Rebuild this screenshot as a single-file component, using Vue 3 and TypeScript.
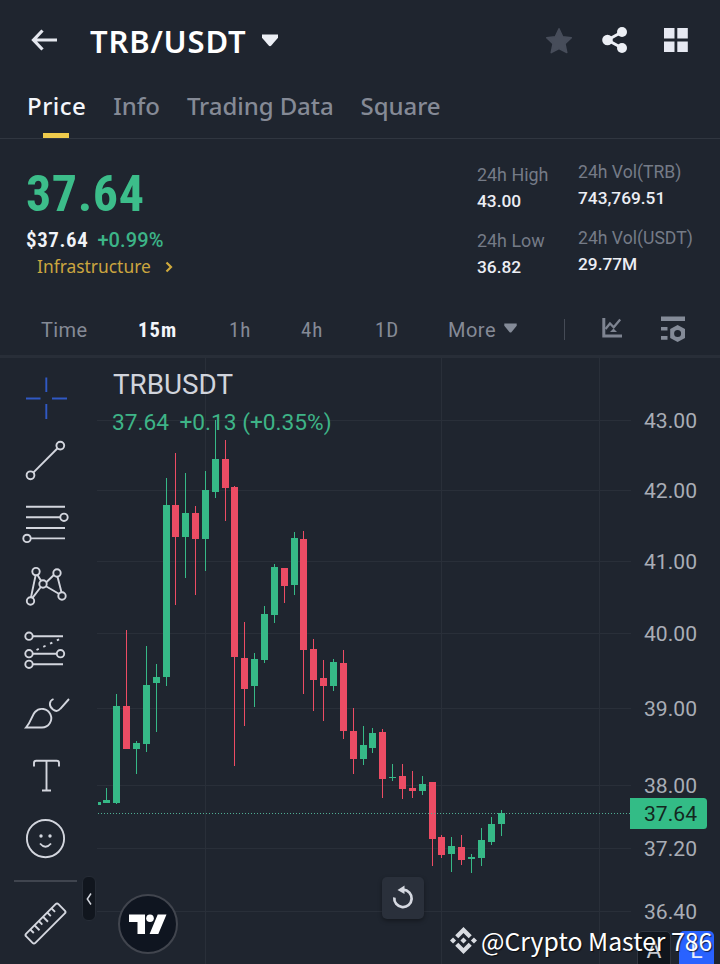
<script setup lang="ts">
interface Candle {
  x: number
  top: number
  bottom: number
  high: number
  low: number
  up: boolean
}

const tabs = ['Price', 'Info', 'Trading Data', 'Square']

const stats = [
  [
    { label: '24h High', value: '43.00' },
    { label: '24h Low', value: '36.82' },
  ],
  [
    { label: '24h Vol(TRB)', value: '743,769.51' },
    { label: '24h Vol(USDT)', value: '29.77M' },
  ],
]

// x centre, body top, body bottom, wick top, wick bottom, 1 = rising
const rows: number[][] = [
  [106.5, 800, 803, 788, 803, 1],
  [116.5, 706, 803, 694, 804, 1],
  [126.5, 706, 749, 630, 749, 0],
  [136.5, 743, 749, 741, 774, 1],
  [146.5, 685, 744, 646, 752, 1],
  [156.5, 677, 683, 664, 732, 1],
  [166.5, 505, 677, 478, 686, 1],
  [175.5, 505, 537, 453, 605, 0],
  [185.5, 513, 537, 473, 578, 1],
  [195.5, 513, 539, 506, 595, 0],
  [205.5, 490, 539, 471, 571, 1],
  [215.5, 459, 492, 420, 498, 1],
  [225.5, 459, 488, 440, 521, 0],
  [234.5, 487, 657, 486, 766, 0],
  [244.5, 658, 689, 622, 726, 0],
  [254.5, 659, 686, 653, 707, 1],
  [264.5, 614, 660, 606, 663, 1],
  [274.5, 567, 615, 564, 623, 1],
  [284.5, 568, 586, 568, 603, 0],
  [294.5, 538, 585, 532, 595, 1],
  [303.5, 539, 650, 531, 694, 0],
  [313.5, 649, 680, 639, 711, 0],
  [323.5, 678, 686, 660, 721, 0],
  [333.5, 662, 686, 659, 691, 1],
  [343.5, 663, 731, 650, 739, 0],
  [353.5, 731, 759, 708, 774, 0],
  [363.5, 745, 759, 726, 765, 1],
  [372.5, 733, 748, 728, 753, 1],
  [382.5, 732, 779, 729, 798, 0],
  [392.5, 777, 778, 764, 781, 1],
  [402.5, 776, 789, 764, 799, 0],
  [412.5, 788, 791, 771, 798, 0],
  [422.5, 784, 791, 776, 795, 1],
  [432.5, 782, 839, 782, 866, 0],
  [441.5, 837, 855, 835, 858, 0],
  [451.5, 846, 854, 837, 872, 1],
  [461.5, 847, 860, 835, 865, 0],
  [471.5, 857, 859, 854, 873, 1],
  [481.5, 840, 858, 828, 866, 1],
  [491.5, 824, 842, 817, 845, 1],
  [501.5, 813, 824, 810, 836, 1],
]

const candles: Candle[] = rows.map(([x, top, bottom, high, low, up]) => ({
  x, top, bottom, high, low, up: up === 1,
}))

const priceLevels = [
  { y: 420.5, label: '43.00' },
  { y: 490, label: '42.00' },
  { y: 561, label: '41.00' },
  { y: 633.5, label: '40.00' },
  { y: 708.5, label: '39.00' },
  { y: 785, label: '38.00' },
  { y: 848, label: '37.20' },
  { y: 911.5, label: '36.40' },
]

const timeLines = [205.5, 441.5, 599.5]
</script>

<template>
  <div class="screen">
    <header class="header">
      <svg class="back" width="28" height="24" viewBox="0 0 28 24">
        <path d="M12.5 2.5 3.5 12l9 9.5M3.5 12H27" fill="none" stroke="#e4e7ee" stroke-width="3.2" />
      </svg>
      <h1 class="pair">TRB/USDT</h1>
      <svg class="caret" width="16" height="13" viewBox="0 0 16 13">
        <path d="M0 0.5h16v3.3L9.3 11.6q-1.3 1.4-2.6 0L0 3.8z" fill="#eceff5" />
      </svg>
      <svg class="star" width="28" height="28" viewBox="0 0 28 28">
        <path d="M14 1.8l3.7 7.9 8.6 1.1-6.3 6 1.8 8.8-7.8-4.1-7.8 4.1L8 16.8 1.7 10.8l8.600-1.1z" fill="#474d5a" stroke="#474d5a" stroke-width="1.5" stroke-linejoin="round" />
      </svg>
      <svg class="share" width="28" height="28" viewBox="0 0 28 28">
        <path d="M21 6 6.5 14 21 22" fill="none" stroke="#eceff5" stroke-width="3" />
        <circle cx="21" cy="6" r="5" fill="#eceff5" />
        <circle cx="6.5" cy="14" r="5.3" fill="#eceff5" />
        <circle cx="21" cy="22" r="5" fill="#eceff5" />
      </svg>
      <svg class="apps" width="24" height="24" viewBox="0 0 24 24" fill="#e6e9f2">
        <path d="M0 0h10.5v10.5H0zM13.3 0h10.5v10.5H13.3zM0 13.5h10.5V24H0zM13.3 13.5h10.5V24H13.3z" />
      </svg>
    </header>

    <nav class="tabs">
      <span v-for="(tab, i) in tabs" :key="tab" class="tab" :class="{ active: i === 0 }">{{ tab }}</span>
    </nav>

    <section class="summary">
      <div class="quote">
        <div class="last">37.64</div>
        <div class="change"><span class="usd">$37.64</span><span class="pct">+0.99%</span></div>
        <div class="tag">
          <span>Infrastructure</span>
          <svg width="8" height="12" viewBox="0 0 8 12">
            <path d="M1.5 1.5 6 6l-4.5 4.5" fill="none" stroke="#cfa93c" stroke-width="2.2" />
          </svg>
        </div>
      </div>
      <div v-for="(column, c) in stats" :key="c" class="stats" :class="'col' + c">
        <div v-for="item in column" :key="item.label" class="stat">
          <div class="label">{{ item.label }}</div>
          <div class="value">{{ item.value }}</div>
        </div>
      </div>
    </section>

    <div class="intervals">
      <span class="time">Time</span>
      <span class="m15">15m</span>
      <span class="h1">1h</span>
      <span class="h4">4h</span>
      <span class="d1">1D</span>
      <span class="more">More</span>
      <svg class="more-caret" width="13" height="10" viewBox="0 0 13 10">
        <path d="M0.3 0.5h12.4v2.2L7.6 8.9q-1.1 1.2-2.2 0L0.3 2.7z" fill="#848b98" />
      </svg>
      <i class="split"></i>
      <svg class="indicator" width="20" height="20" viewBox="0 0 20 20">
        <path d="M1.8 0v18H20" fill="none" stroke="#7e8491" stroke-width="3" />
        <path d="M3.5 11 8 5.5l3.7 3.7L18.2 1.6" fill="none" stroke="#7e8491" stroke-width="2.3" />
        <path d="M11.5 10.5l3.5 3.500H8z" fill="#7e8491" />
      </svg>
      <svg class="settings" width="26" height="26" viewBox="0 0 26 26" fill="#848b98">
        <path d="M1 0.5h24V5H1zM1 11h6.5v3.5H1zM1 20h6.5v3.7H1z" />
        <path fill-rule="evenodd" d="M17.6 9 25 13v9l-7.400 4-7.400-4v-9zM17.6 14a3.500 3.500 0 1 0 0 7 3.500 3.500 0 0 0 0-7z" />
      </svg>
    </div>

    <main class="workspace">
      <aside class="tools">
        <svg viewBox="0 0 92 63" class="tool blue">
          <path d="M46.3 11.5V26M46.3 38v15M26 32.5h14.5M52 32.5h15" />
        </svg>
        <svg viewBox="0 0 92 63" class="tool">
          <path d="M33.5 43.3 57.3 19.5" /><circle cx="60.3" cy="16.6" r="3.9" /><circle cx="30.5" cy="46.3" r="3.9" />
        </svg>
        <svg viewBox="0 0 92 63" class="tool">
          <path d="M26 14.7h39M26 25.3h34M26 36h39M31 46.4h34" />
          <circle cx="64" cy="25.3" r="3.7" /><circle cx="27" cy="46.4" r="3.7" />
        </svg>
        <svg viewBox="0 0 92 63" class="tool">
          <path d="M35.6 20.4 31 42.3M37.5 20l3.5 5.7M46.3 27.2 53.8 20M40.8 32 32.5 42.9M46 31.3l12.8 7.4M57.5 21.7l4 15.5" />
          <circle cx="36" cy="16.6" r="3.7" /><circle cx="57" cy="18" r="3.7" /><circle cx="43" cy="29" r="3.7" />
          <circle cx="62" cy="41" r="3.7" /><circle cx="30.5" cy="46" r="3.7" />
        </svg>
        <svg viewBox="0 0 92 63" class="tool">
          <path d="M33 18.2h30M33 35.7h23.5M33 46.3h30" />
          <path d="M36.5 32 62 20" stroke-dasharray="2.5 5" />
          <circle cx="29" cy="18.2" r="3.7" /><circle cx="29" cy="35.7" r="3.7" />
          <circle cx="60.5" cy="35.7" r="3.7" /><circle cx="29" cy="46.3" r="3.7" />
        </svg>
        <svg viewBox="0 0 92 63" class="tool">
          <path d="M26 46.5C31.5 40 32 34 35 31A9.3 9.3 0 1 1 42 46.5Z" />
          <path d="M53.5 18C49 20 48.500 25 53 28.5 56 30.8 58.5 30 60.5 27.5L69 18" />
        </svg>
        <svg viewBox="0 0 92 63" class="tool">
          <path d="M34 22.500v-3.500q0-2.300 2.300-2.300h20.400q2.300 0 2.300 2.300v3.500M46.500 17v29.500M42 46.500h9" />
        </svg>
        <svg viewBox="0 0 92 63" class="tool">
          <circle cx="45.5" cy="31.6" r="18.6" />
          <path d="M40 36.5q5.5 6.5 11 0" />
          <circle cx="41" cy="29" r="1.7" class="dot" /><circle cx="50" cy="29" r="1.7" class="dot" />
        </svg>
        <i class="rule"></i>
        <svg viewBox="0 0 92 63" class="tool ruler">
          <g transform="translate(45.5 31.5) rotate(-45)">
            <rect x="-22.8" y="-6.5" width="45.6" height="13" rx="2" />
            <path d="M-15 -6.5v5M-9 -6.5v7M-3 -6.5v5M3 -6.5v7M9 -6.5v5M15 -6.5v5" />
          </g>
        </svg>
      </aside>

      <svg class="plot" width="623" height="606" viewBox="97 358 623 606">
        <g stroke="#292f39" stroke-width="1">
          <line v-for="x in timeLines" :key="x" :x1="x" :x2="x" y1="358" y2="964" />
          <line v-for="level in priceLevels" :key="level.label" x1="97" x2="631" :y1="Math.floor(level.y) + 0.5" :y2="Math.floor(level.y) + 0.5" />
        </g>
        <rect x="98" y="802" width="3" height="3" fill="#36b887" />
        <g v-for="c in candles" :key="c.x" :fill="c.up ? '#36b987' : '#ec4c64'">
          <rect :x="c.x - 0.5" :y="c.high" width="1" :height="c.low - c.high" />
          <rect :x="c.x - 3.5" :y="c.top" width="7" :height="c.bottom - c.top" />
        </g>
        <line x1="98" x2="630" y1="813.5" y2="813.5" stroke="#4fae93" stroke-dasharray="1 2" />
        <text x="113" y="394" class="symbol">TRBUSDT</text>
        <text x="112" y="430" class="ohlc">37.64</text>
        <text x="179.5" y="430" class="ohlc">+0.13 (+0.35%)</text>
        <text v-for="level in priceLevels" :key="level.label" x="644" :y="level.y + 7.5" class="axis">{{ level.label }}</text>
        <path d="M630 798h73.5q3.5 0 3.500 3.500v24q0 3.500-3.500 3.500H630z" fill="#33bc86" />
        <text x="644" y="821.3" class="axis current">37.64</text>
      </svg>

      <button class="collapse" aria-label="Collapse">
        <svg width="8" height="14" viewBox="0 0 8 14"><path d="M6 1.500 2.300 7 6 12.500" fill="none" stroke="#d1d4dc" stroke-width="1.500" /></svg>
      </button>
      <div class="brand">
        <svg width="38" height="20" viewBox="0 0 38 20" fill="#fff">
          <path d="M0 0.500h16V20H8.500V8H0zM28.700 0.500h8.800L29.300 20H20.600z" /><circle cx="21" cy="4.200" r="3.800" />
        </svg>
      </div>
      <button class="reset" aria-label="Reset">
        <svg width="24" height="26" viewBox="0 0 24 26">
          <path d="M3.300 12.500a8.700 8.700 0 1 0 9-7.800" fill="none" stroke="#d6d9e1" stroke-width="2.700" />
          <path d="M6.500 5 13.500 0.600v8.400z" fill="#d6d9e1" />
        </svg>
      </button>
      <div class="scale auto">A</div>
      <div class="scale log">L</div>
      <div class="watermark">
        <svg width="27" height="27" viewBox="0 0 24 24">
          <path fill="#d9dce2" d="M16.624 13.920l2.718 2.716-7.353 7.353-7.353-7.352 2.717-2.717 4.636 4.660 4.635-4.660zM21.261 9.284 24 12l-2.715 2.716L18.568 12zM11.989 9.285l2.716 2.691-2.716 2.718L9.272 12zM2.716 9.284 5.409 12l-2.692 2.692L0 12zM11.989.012l7.353 7.329-2.718 2.715-4.635-4.636-4.636 4.660-2.717-2.715z" />
        </svg>
        <span>@Crypto Master 786</span>
      </div>
    </main>
  </div>
</template>

<style>
body {
  background: #1f252f;
}
</style>

<style scoped>
.screen {
  width: 720px;
  height: 964px;
  overflow: hidden;
  display: flex;
  flex-direction: column;
  background: #1f252f;
  color: #858a96;
  font-family: Roboto, sans-serif;
}
.header {
  display: flex;
  align-items: center;
  height: 80px;
  padding-left: 30px;
}
.pair {
  width: 156px;
  margin: 2px 0 0 32px;
  font: 600 31px/40px "Noto Sans", sans-serif;
  letter-spacing: 0.8px;
  white-space: nowrap;
  color: #fff;
}
.caret { margin-left: 16px; }
.star { margin: 2px 0 0 267px; }
.share { margin-left: 28px; }
.apps { margin-left: 35px; }

.tabs {
  display: flex;
  gap: 27px;
  height: 58px;
  padding-left: 27px;
  border-bottom: 1px solid #303640;
}
.tab {
  position: relative;
  padding-top: 10px;
  font: 500 24px/32px "Noto Sans", sans-serif;
  letter-spacing: -0.06px;
  white-space: nowrap;
}
.tab.active { color: #f4f6fb; letter-spacing: 0.5px; }
.tab.active::after {
  content: "";
  position: absolute;
  left: 16px;
  bottom: 0;
  width: 26px;
  height: 5px;
  background: #efcb4c;
}

.summary {
  display: flex;
  height: 164px;
}
.quote { width: 451px; padding: 27px 0 0 26px; }
.last {
  font: 700 50px/56px "Roboto Condensed", sans-serif;
  letter-spacing: 0.6px;
  color: #3cbd8a;
}
.change {
  margin-top: 5px;
  font: 600 21px/26px "Roboto Condensed", sans-serif;
  letter-spacing: 0.6px;
}
.usd { color: #f1f3f8; }
.pct { margin-left: 9px; font: 500 20px/26px Roboto, sans-serif; letter-spacing: 0.1px; color: #3cb487; }
.tag {
  display: flex;
  align-items: center;
  gap: 14px;
  padding-left: 11px;
  font: 400 17.4px/27px "Noto Sans", sans-serif;
  color: #cba63f;
}
.stats { display: flex; flex-direction: column; gap: 14px; }
.col0 { width: 101px; padding-top: 23px; }
.col0 .label { font-size: 17.9px; }
.col1 { padding-top: 20px; }
.label { font-size: 17.6px; line-height: 26px; white-space: nowrap; color: #757b87; }
.value { font: 500 17.3px/26px Roboto, sans-serif; color: #eceef4; }

.intervals {
  display: flex;
  align-items: center;
  height: 52px;
  padding-left: 41px;
  border-bottom: 3px solid #282e38;
  font-size: 20px;
  line-height: 24px;
}
.intervals > * { flex: none; }
.intervals > span { padding-top: 1px; }
.time { width: 97px; letter-spacing: 0.4px; }
.m15 { width: 91px; color: #f4f6fb; font: 700 20.500px/24px "Roboto Condensed", sans-serif; letter-spacing: 1.2px; }
.h1, .h4, .d1 { font-family: "Roboto Condensed", sans-serif; font-size: 21px; letter-spacing: 0.9px; }
.h1 { width: 72px; }
.h4 { width: 74px; }
.d1 { width: 73px; }
.more { width: 56px; letter-spacing: 0.5px; }
.more-caret { margin-top: -2px; }
.split { width: 1px; height: 21px; margin-left: 47px; background: #454b56; }
.indicator { margin: -2px 0 0 37px; }
.settings { margin-left: 38px; }

.workspace { position: relative; display: flex; height: 606px; }
.tools { display: flex; flex-direction: column; width: 97px; padding-top: 8px; box-sizing: border-box; }
.tool { flex: none; width: 92px; height: 63px; fill: none; stroke: #d3d6de; stroke-width: 1.9; }
.blue { stroke: #3059c4; }
.dot { fill: #d3d6de; stroke: none; }
.rule { flex: none; width: 63px; height: 2px; margin: 10px 0 0 14px; background: #40454f; }
.ruler { margin-top: 10px; }
.plot { flex: none; }
.symbol { font-size: 27.8px; fill: #d1d4dc; }
.ohlc { font-size: 22.7px; fill: #3eb487; }
.axis { font-size: 21.1px; fill: #a9adb6; }
.current { fill: #14271f; }

.collapse {
  position: absolute;
  left: 82px;
  top: 518px;
  display: grid;
  place-items: center;
  width: 14px;
  height: 45px;
  padding: 0;
  border: 1px solid #262c36;
  border-radius: 6px;
  background: #11161e;
}
.brand {
  position: absolute;
  left: 118px;
  top: 536px;
  display: grid;
  place-items: center;
  width: 60px;
  height: 60px;
  box-sizing: border-box;
  border: 2px solid #41454e;
  border-radius: 50%;
  background: #0f1520;
}
.reset {
  position: absolute;
  left: 382px;
  top: 519px;
  display: grid;
  place-items: center;
  width: 42px;
  height: 42px;
  padding: 0;
  border: 0;
  border-radius: 5px;
  background: #2a303b;
  box-shadow: 0 2px 4px rgba(0, 0, 0, 0.35);
}
.scale {
  position: absolute;
  top: 573px;
  width: 34px;
  height: 40px;
  box-sizing: border-box;
  border-radius: 5px;
  font-size: 23px;
  line-height: 39px;
  text-align: center;
  color: #c9ccd4;
}
.auto { left: 637px; border: 1px solid #30353f; background: #10151d; line-height: 37px; }
.log { left: 679px; width: 35px; background: #2962ff; color: #e6ebfa; }
.watermark {
  position: absolute;
  left: 450px;
  top: 564px;
  display: flex;
  align-items: center;
  gap: 4px;
  height: 36px;
  font: 400 24.8px/36px "Noto Sans CJK SC", sans-serif;
  white-space: nowrap;
  color: #fff;
  text-shadow: 1px 1px 1px rgba(0, 0, 0, 0.7);
}
</style>
